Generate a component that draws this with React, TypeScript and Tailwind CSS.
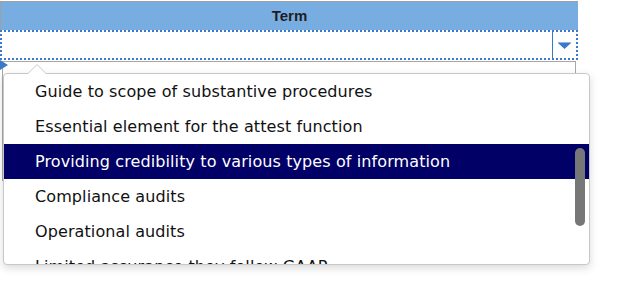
import React from "react"

const options = [
  "Guide to scope of substantive procedures",
  "Essential element for the attest function",
  "Providing credibility to various types of information",
  "Compliance audits",
  "Operational audits",
  "Limited assurance they follow GAAP",
]

export default function App() {
  const selected = 2

  return (
    <div className="relative w-[634px] h-[305px] overflow-hidden bg-white font-['DejaVu_Sans',sans-serif]">
      {/* Grid */}
      <div className="w-[578px] pt-px">
        <div className="border-t border-l border-[#a0a0a0]">
          <div className="h-[28px] bg-[#78ade2] flex items-center justify-center font-['Liberation_Sans',sans-serif] font-bold text-[15px] text-[#1e1e1e]">
            Term
          </div>
        </div>
        <div className="h-[30px] flex border-2 border-dotted border-[#3a78c8] bg-white">
          <div className="flex-1" />
          <div className="w-[24px] border-l border-[#3a78c8] flex items-center justify-center">
            <svg width="13" height="7" viewBox="0 0 13 7">
              <rect x="0" y="0" width="13" height="1" fill="#8fb3e3" />
              <path d="M0 1 H13 L6.5 7 Z" fill="#3a78c8" />
            </svg>
          </div>
        </div>
        <div className="ml-[2px] mt-px h-[120px] w-[574px] border-l border-t border-r border-[#a8a8a8]" />
      </div>

      {/* Row marker */}
      <svg className="absolute left-0 top-[60px]" width="8" height="10" viewBox="0 0 8 10">
        <path d="M0 0 L8 5 L0 10 Z" fill="#3a78c8" />
      </svg>

      {/* Dropdown list */}
      <div className="absolute left-[3px] top-[73px] w-[587px] h-[192px] rounded-[4px] border border-[#c8c8c8] bg-white shadow-[0_3px_8px_rgba(0,0,0,0.15)]">
        <svg className="absolute left-[23px] -top-[10px]" width="20" height="11" viewBox="0 0 20 11">
          <path d="M0 10.5 L10 0.5 L20 10.5" fill="#fff" stroke="#c8c8c8" />
          <rect x="0" y="10" width="20" height="1" fill="#fff" />
        </svg>
        <div className="h-full overflow-hidden rounded-[4px]">
          {options.map((opt, i) => (
            <div
              key={opt}
              className={
                i === selected
                  ? "h-[35px] pl-[31px] flex items-center text-[16px] tracking-[0.1px] bg-[#000066] text-white whitespace-nowrap"
                  : "h-[35px] pl-[31px] flex items-center text-[16px] tracking-[0.1px] text-[#111] whitespace-nowrap"
              }
            >
              {opt}
            </div>
          ))}
        </div>
        <div className="absolute right-[4px] top-[74px] w-[10px] h-[78px] rounded-full bg-[#777777]" />
      </div>
    </div>
  )
}
